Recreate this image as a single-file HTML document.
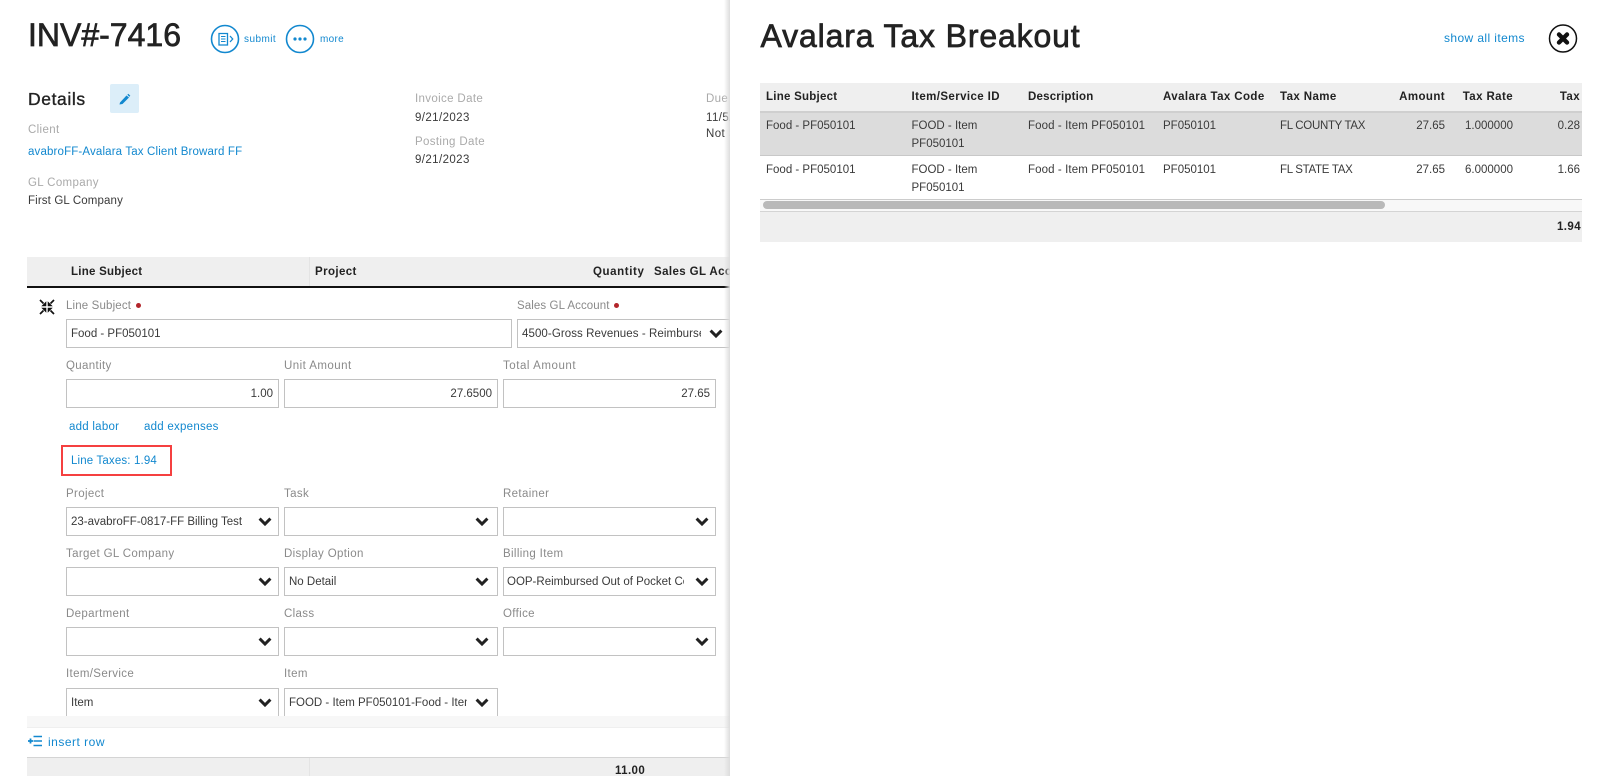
<!DOCTYPE html>
<html><head><meta charset="utf-8">
<style>
html,body{margin:0;padding:0;width:1600px;height:776px;overflow:hidden;background:#fff}
body{font-family:"Liberation Sans",sans-serif;font-size:11.5px;color:#3a3a3a;position:relative}
.t,.l,.a,.b,.box,.abs{position:absolute}
.t,.l,.a,.b{line-height:16px;white-space:nowrap;margin-top:1px}
.l{color:#8a8a8a;letter-spacing:.35px}
.g{color:#aaa}
.a{color:#1288cf;letter-spacing:.15px}
.b{font-weight:bold;color:#222;letter-spacing:.4px}
.box{border:1px solid #c2c2c2;box-sizing:border-box;height:29px;background:#fff;line-height:28px;padding:0 5px 0 4px;white-space:nowrap;overflow:hidden}
.r{text-align:right}
.box span{display:block;overflow:hidden}
.ch{position:absolute;width:14px;height:9px}
.m0{margin-top:0}
.m2{margin-top:2px}
.d{letter-spacing:.4px}
#left{position:absolute;left:0;top:0;width:730px;height:776px;overflow:hidden}
#shadow{position:absolute;left:724px;top:0;width:6px;height:776px;background:linear-gradient(to right,rgba(225,225,225,0),#dcdcdc)}
#right{position:absolute;left:730px;top:0;width:870px;height:776px;background:#fff}
.dot{position:absolute;width:5px;height:5px;border-radius:50%;background:#b3262b}
</style></head><body>
<svg width="0" height="0" style="position:absolute"><defs><symbol id="c" viewBox="0 0 14 9"><path d="M1.6 1.6L7 7L12.4 1.6" fill="none" stroke="#222" stroke-width="3"/></symbol></defs></svg>
<div id="left">
<div class="t m0" style="left:28px;top:16px;font-size:32px;line-height:38px;color:#222;-webkit-text-stroke:.7px #222">INV#-7416</div>
<svg class="abs" style="left:210px;top:24px" width="30" height="30" viewBox="0 0 30 30"><circle cx="15" cy="15" r="13.5" fill="#fff" stroke="#1288cf" stroke-width="1.6"/><path d="M9 9.5h8.5v11.5H9z" fill="none" stroke="#1288cf" stroke-width="1.3"/><path d="M11 12.5h4.5M11 15h4.5M11 17.5h4.5" stroke="#1288cf" stroke-width="1"/><path d="M20 12l2.7 3-2.7 3" fill="none" stroke="#1288cf" stroke-width="1.3"/></svg>
<div class="a" style="left:244px;top:31px;font-size:10px;letter-spacing:.45px">submit</div>
<svg class="abs" style="left:285px;top:24px" width="30" height="30" viewBox="0 0 30 30"><circle cx="15" cy="15" r="13.5" fill="#fff" stroke="#1288cf" stroke-width="1.6"/><circle cx="10" cy="15" r="1.6" fill="#1288cf"/><circle cx="15" cy="15" r="1.6" fill="#1288cf"/><circle cx="20" cy="15" r="1.6" fill="#1288cf"/></svg>
<div class="a" style="left:320px;top:31px;font-size:10px;letter-spacing:.3px">more</div>

<div class="t m0" style="left:28px;top:89px;font-size:17.5px;line-height:20px;color:#222;letter-spacing:.6px;-webkit-text-stroke:.35px #222">Details</div>
<div class="abs" style="left:110px;top:84px;width:29px;height:29px;background:#dceef9;border-radius:2px"></div>
<svg class="abs" style="left:118px;top:92px" width="14" height="14" viewBox="0 0 14 14"><path d="M2 10.5L8.5 3.5L11 5.5L4.5 12L1.5 12.5z" fill="#1288cf"/><path d="M9.3 2.7l1-1 2 2-1 1z" fill="#1288cf"/></svg>
<div class="l g" style="left:28px;top:121px">Client</div>
<div class="a" style="left:28px;top:143px">avabroFF-Avalara Tax Client Broward FF</div>
<div class="l g" style="left:28px;top:174px">GL Company</div>
<div class="t" style="left:28px;top:192px;letter-spacing:.13px">First GL Company</div>

<div class="l g" style="left:415px;top:90px">Invoice Date</div>
<div class="t d" style="left:415px;top:109px">9/21/2023</div>
<div class="l g" style="left:415px;top:133px">Posting Date</div>
<div class="t d" style="left:415px;top:151px">9/21/2023</div>
<div class="l g" style="left:706px;top:90px">Due Date</div>
<div class="t d" style="left:706px;top:109px">11/5/2023</div>
<div class="t d" style="left:706px;top:125px">Not Sent</div>

<div class="abs" style="left:27px;top:257px;width:703px;height:29px;background:#efefef;border-bottom:2px solid #111"></div>
<div class="abs" style="left:309px;top:257px;width:1px;height:29px;background:#e4e4e4"></div>
<div class="b" style="left:71px;top:263px;letter-spacing:.25px">Line Subject</div>
<div class="b" style="left:315px;top:263px">Project</div>
<div class="b" style="left:593px;top:263px;letter-spacing:.6px">Quantity</div>
<div class="b" style="left:654px;top:263px">Sales GL Account</div>

<svg class="abs" style="left:39px;top:299px" width="16" height="16" viewBox="0 0 16 16"><g fill="#111" stroke="#111"><path d="M7 7H3L7 3z" stroke-width=".6"/><path d="M9 7h4L9 3z" stroke-width=".6"/><path d="M7 9H3L7 13z" stroke-width=".6"/><path d="M9 9h4L9 13z" stroke-width=".6"/><path d="M1 1L4.500 4.500M15 1L11.500 4.500M1 15L4.500 11.500M15 15L11.500 11.500" stroke-width="1.7" fill="none"/></g></svg>
<div class="l" style="left:66px;top:297px;letter-spacing:.15px">Line Subject</div><div class="dot" style="left:136px;top:303px"></div>
<div class="box" style="left:66px;top:319px;width:446px">Food - PF050101</div>
<div class="l" style="left:517px;top:297px;letter-spacing:.1px">Sales GL Account</div><div class="dot" style="left:614px;top:303px"></div>
<div class="box" style="left:517px;top:319px;width:213px;letter-spacing:.08px"><span style="width:179px">4500-Gross Revenues - Reimbursed</span></div>
<svg class="ch" style="left:709px;top:329px"><use href="#c"/></svg>

<div class="l" style="left:66px;top:357px">Quantity</div>
<div class="l" style="left:284px;top:357px;letter-spacing:.45px">Unit Amount</div>
<div class="l" style="left:503px;top:357px;letter-spacing:.55px">Total Amount</div>
<div class="box r" style="left:66px;top:379px;width:213px">1.00</div>
<div class="box r" style="left:284px;top:379px;width:214px">27.6500</div>
<div class="box r" style="left:503px;top:379px;width:213px">27.65</div>

<div class="a" style="left:69px;top:418px;letter-spacing:.25px">add labor</div>
<div class="a" style="left:144px;top:418px;letter-spacing:.25px">add expenses</div>
<div class="abs" style="left:61px;top:445px;width:111px;height:31px;border:2px solid #f54040;box-sizing:border-box"></div>
<div class="a" style="left:71px;top:452px">Line Taxes: 1.94</div>

<div class="l" style="left:66px;top:485px">Project</div>
<div class="l" style="left:284px;top:485px">Task</div>
<div class="l" style="left:503px;top:485px">Retainer</div>
<div class="box" style="left:66px;top:507px;width:213px"><span style="width:180px">23-avabroFF-0817-FF Billing Test</span></div>
<div class="box" style="left:284px;top:507px;width:214px"></div>
<div class="box" style="left:503px;top:507px;width:213px"></div>
<svg class="ch" style="left:258px;top:517px"><use href="#c"/></svg>
<svg class="ch" style="left:475px;top:517px"><use href="#c"/></svg>
<svg class="ch" style="left:695px;top:517px"><use href="#c"/></svg>

<div class="l" style="left:66px;top:545px">Target GL Company</div>
<div class="l" style="left:284px;top:545px">Display Option</div>
<div class="l" style="left:503px;top:545px">Billing Item</div>
<div class="box" style="left:66px;top:567px;width:213px"></div>
<div class="box" style="left:284px;top:567px;width:214px">No Detail</div>
<div class="box" style="left:503px;top:567px;width:213px;padding-left:3px"><span style="width:177px">OOP-Reimbursed Out of Pocket Cost</span></div>
<svg class="ch" style="left:258px;top:577px"><use href="#c"/></svg>
<svg class="ch" style="left:475px;top:577px"><use href="#c"/></svg>
<svg class="ch" style="left:695px;top:577px"><use href="#c"/></svg>

<div class="l" style="left:66px;top:605px">Department</div>
<div class="l" style="left:284px;top:605px">Class</div>
<div class="l" style="left:503px;top:605px">Office</div>
<div class="box" style="left:66px;top:627px;width:213px"></div>
<div class="box" style="left:284px;top:627px;width:214px"></div>
<div class="box" style="left:503px;top:627px;width:213px"></div>
<svg class="ch" style="left:258px;top:637px"><use href="#c"/></svg>
<svg class="ch" style="left:475px;top:637px"><use href="#c"/></svg>
<svg class="ch" style="left:695px;top:637px"><use href="#c"/></svg>

<div class="l" style="left:66px;top:665px">Item/Service</div>
<div class="l" style="left:284px;top:665px">Item</div>
<div class="box" style="left:66px;top:688px;width:213px">Item</div>
<div class="box" style="left:284px;top:688px;width:214px"><span style="width:178px">FOOD - Item PF050101-Food - Item</span></div>
<svg class="ch" style="left:258px;top:698px"><use href="#c"/></svg>
<svg class="ch" style="left:475px;top:698px"><use href="#c"/></svg>

<div class="abs" style="left:27px;top:716px;width:703px;height:11px;background:#f7f7f7;border-bottom:1px solid #efefef"></div>
<div class="abs" style="left:27px;top:728px;width:703px;height:29px;background:#fff"></div>
<svg class="abs" style="left:28px;top:734px" width="14" height="14" viewBox="0 0 14 14"><path d="M5.5 2.5H14M5.5 7H14M5.5 11.5H14" stroke="#1288cf" stroke-width="1.6"/><path d="M0 7H5M2.5 4.5V9.5" stroke="#1288cf" stroke-width="1.8"/></svg>
<div class="a m0" style="left:48px;top:734px;font-size:12px;letter-spacing:.5px">insert row</div>
<div class="abs" style="left:27px;top:757px;width:703px;height:19px;background:#efefef;border-top:1px solid #d4d4d4"></div>
<div class="abs" style="left:309px;top:758px;width:1px;height:18px;background:#e4e4e4"></div>
<div class="b m0" style="left:615px;top:763px">11.00</div>
<div id="shadow"></div>
</div>

<div id="right">
<div class="t m0" style="left:30.5px;top:17px;font-size:32px;line-height:38px;color:#222;letter-spacing:.85px;-webkit-text-stroke:.7px #222">Avalara Tax Breakout</div>
<div class="a m0" style="left:714px;top:30px;font-size:12px;letter-spacing:.4px">show all items</div>
<svg class="abs" style="left:818px;top:23px" width="30" height="30" viewBox="0 0 30 30"><circle cx="15" cy="15.5" r="13.5" fill="#fff" stroke="#111" stroke-width="1.5"/><path d="M11 11.5L19 19.5M19 11.5L11 19.5" stroke="#111" stroke-width="4.4" stroke-linecap="round"/></svg>

<div class="abs" style="left:30px;top:83px;width:822px;height:28px;background:#efefef"></div>
<div class="abs" style="left:30px;top:111px;width:822px;height:2px;background:#cfcfcf"></div>
<div class="abs" style="left:30px;top:113px;width:822px;height:42px;background:#dcdcdc"></div>
<div class="abs" style="left:30px;top:155px;width:822px;height:1px;background:#c8c8c8"></div>
<div class="abs" style="left:30px;top:199px;width:822px;height:1px;background:#ccc"></div>
<div class="abs" style="left:30px;top:200px;width:822px;height:11px;background:#f8f8f8"></div>
<div class="abs" style="left:33px;top:201px;width:622px;height:8px;background:#b9b9b9;border-radius:4px"></div>
<div class="abs" style="left:30px;top:211px;width:822px;height:1px;background:#d4d4d4"></div>
<div class="abs" style="left:30px;top:212px;width:822px;height:30px;background:#efefef"></div>

<div class="b m0" style="left:36px;top:89px;letter-spacing:.25px">Line Subject</div>
<div class="b m0" style="left:181.5px;top:89px">Item/Service ID</div>
<div class="b m0" style="left:298px;top:89px;letter-spacing:.2px">Description</div>
<div class="b m0" style="left:433px;top:89px">Avalara Tax Code</div>
<div class="b m0" style="left:550px;top:89px">Tax Name</div>
<div class="b m0 r" style="right:155px;top:89px">Amount</div>
<div class="b m0 r" style="right:87px;top:89px">Tax Rate</div>
<div class="b m0 r" style="right:20px;top:89px">Tax</div>

<div class="t" style="left:36px;top:117px">Food - PF050101</div>
<div class="t" style="left:181.5px;top:117px">FOOD - Item</div>
<div class="t m2" style="left:181.5px;top:134px">PF050101</div>
<div class="t" style="left:298px;top:117px;letter-spacing:.1px">Food - Item PF050101</div>
<div class="t" style="left:433px;top:117px">PF050101</div>
<div class="t" style="left:550px;top:117px;letter-spacing:-.3px">FL COUNTY TAX</div>
<div class="t r" style="right:155px;top:117px">27.65</div>
<div class="t r" style="right:87px;top:117px">1.000000</div>
<div class="t r" style="right:20px;top:117px">0.28</div>

<div class="t" style="left:36px;top:161px">Food - PF050101</div>
<div class="t" style="left:181.5px;top:161px">FOOD - Item</div>
<div class="t m2" style="left:181.5px;top:178px">PF050101</div>
<div class="t" style="left:298px;top:161px;letter-spacing:.1px">Food - Item PF050101</div>
<div class="t" style="left:433px;top:161px">PF050101</div>
<div class="t" style="left:550px;top:161px;letter-spacing:-.3px">FL STATE TAX</div>
<div class="t r" style="right:155px;top:161px">27.65</div>
<div class="t r" style="right:87px;top:161px">6.000000</div>
<div class="t r" style="right:20px;top:161px">1.66</div>

<div class="b r" style="right:19px;top:218px">1.94</div>
</div>
</body></html>
